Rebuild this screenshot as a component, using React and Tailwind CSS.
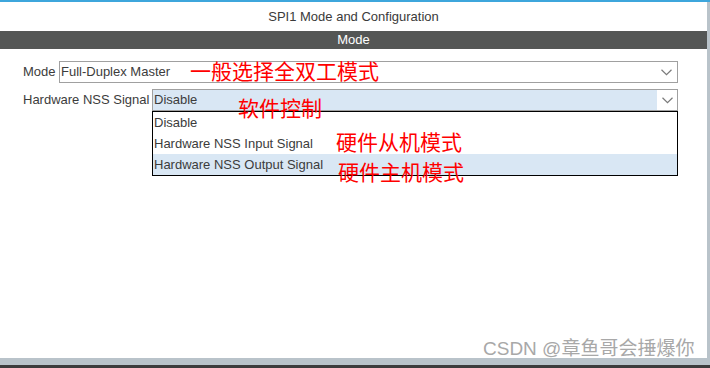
import React from "react";

const Chevron = () => (
  <svg width="11" height="7" viewBox="0 0 11 7" className="shrink-0">
    <path d="M0.5 0.8 L5.5 5.6 L10.5 0.8" fill="none" stroke="#7a7a7a" strokeWidth="1.2" />
  </svg>
);

export default function App() {
  const sans = { fontFamily: '"Liberation Sans", Arial, sans-serif' };
  const cjk = { fontFamily: '"Noto Sans CJK SC", "Noto Sans", sans-serif' };
  return (
    <div className="relative w-[710px] h-[368px] overflow-hidden bg-white flex flex-col" style={sans}>
      <div className="h-[2px] bg-[#3da6dc]" />
      <div className="flex flex-1 min-h-0">
        <div className="flex-1 flex flex-col">
          <div className="h-[29px] flex items-center justify-center text-[13px] text-[#3a3a3a]">
            SPI1 Mode and Configuration
          </div>
          <div className="h-[18px] bg-[#545655] flex items-center justify-center text-[13px] text-white">
            Mode
          </div>
          <div className="flex flex-col gap-[6px] pt-[12px] pl-[23px] pr-[29px] text-[13px] text-[#3c3c3c]">
            <div className="flex items-center gap-[5px]">
              <span className="w-[31px] shrink-0 whitespace-nowrap">Mode</span>
              <div className="flex-1 h-[22px] border border-[#a0a0a0] bg-white flex items-center justify-between pl-[1px] pr-[5px]">
                <span>Full-Duplex Master</span>
                <Chevron />
              </div>
            </div>
            <div className="flex items-center gap-[4px]">
              <span className="w-[125px] shrink-0 whitespace-nowrap">Hardware NSS Signal</span>
              <div className="relative flex-1 h-[22px] border border-[#a0a0a0] flex">
                <div className="flex-1 bg-[#d9e7f4] flex items-center pl-[1px]">Disable</div>
                <div className="w-[20px] bg-white flex items-center justify-center">
                  <Chevron />
                </div>
                <div className="absolute left-[-1px] right-[-1px] top-[21px] border border-black bg-white flex flex-col z-10">
                  <div className="h-[21px] flex items-center pl-[1px]">Disable</div>
                  <div className="h-[21px] flex items-center pl-[1px]">Hardware NSS Input Signal</div>
                  <div className="h-[21px] flex items-center pl-[1px] bg-[#d9e7f4]">Hardware NSS Output Signal</div>
                </div>
              </div>
            </div>
          </div>
        </div>
        <div className="w-[3px] bg-[#b9c3ca]" />
      </div>
      <div className="h-[7px] bg-[#b9c3ca]" />
      <div className="h-[3px] bg-[#3c3c3c]" />

      <span className="absolute left-[190px] top-[58px] text-[21px] leading-[24px] text-[#ff0000] z-20" style={cjk}>一般选择全双工模式</span>
      <span className="absolute left-[238px] top-[95px] text-[21px] leading-[24px] text-[#ff0000] z-20" style={cjk}>软件控制</span>
      <span className="absolute left-[336px] top-[129px] text-[21px] leading-[24px] text-[#ff0000] z-20" style={cjk}>硬件从机模式</span>
      <span className="absolute left-[338px] top-[159px] text-[21px] leading-[24px] text-[#ff0000] z-20" style={cjk}>硬件主机模式</span>
      <span
        className="absolute left-[483px] top-[337px] text-[19px] leading-[24px] text-[#a8a8a8] z-20 whitespace-nowrap"
        style={{ fontFamily: '"Liberation Sans", "Noto Sans CJK SC", sans-serif' }}
      >
        CSDN @章鱼哥会捶爆你
      </span>
    </div>
  );
}
